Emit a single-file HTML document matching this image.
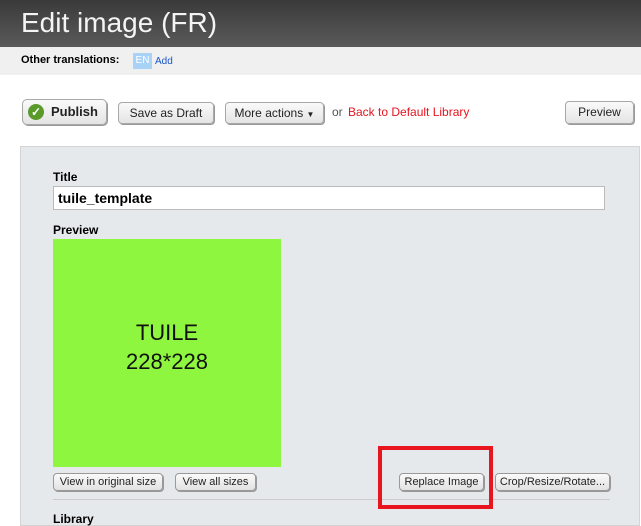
<!DOCTYPE html><html><head><style>
body{margin:0;width:641px;height:518px;overflow:hidden;font-family:"Liberation Sans",Arial,sans-serif;background:#fff;position:relative}
.a{position:absolute}
.btn{position:absolute;background:linear-gradient(#fafafa,#e4e4e4);border:1px solid #a8a8a8;border-radius:4px;font-size:12px;color:#222;text-align:center;box-sizing:border-box;box-shadow:1px 1px 0 #999}
.sb{position:absolute;background:linear-gradient(#fafafa,#e2e2e2);border:1px solid #999;border-radius:4px;font-size:11px;color:#222;text-align:center;box-sizing:border-box;height:18px;line-height:16px;box-shadow:1px 1px 0 #999}
</style></head><body>
<div class="a" style="left:0;top:0;width:641px;height:47px;background:linear-gradient(#3a3a3a,#5a5a5a)"></div>
<div class="a" style="left:21px;top:7px;font-size:28px;color:#f4f4f4">Edit image (FR)</div>
<div class="a" style="left:0;top:47px;width:641px;height:28px;background:#f0f0f0"></div>
<div class="a" style="left:21px;top:54px;font-size:11px;font-weight:bold">Other translations:</div>
<div class="a" style="left:133px;top:53px;width:19px;height:16px;background:#a9d2f7;color:#fff;font-size:10px;line-height:16px;text-align:center">EN</div>
<div class="a" style="left:155px;top:56px;font-size:10px;color:#1a55c8">Add</div>
<div class="btn" style="left:22px;top:99px;width:85px;height:26px;border-radius:5px"></div>
<div class="a" style="left:28px;top:104px;width:16px;height:16px;border-radius:50%;background:#5a9a2a;color:#fff;font-size:12px;line-height:16px;text-align:center;font-weight:bold">✓</div>
<div class="a" style="left:51px;top:104px;font-size:13px;font-weight:bold;color:#222">Publish</div>
<div class="btn" style="left:118px;top:102px;width:96px;height:22px;line-height:20px">Save as Draft</div>
<div class="btn" style="left:225px;top:102px;width:99px;height:22px;line-height:20px">More actions <span style="font-size:8px">▼</span></div>
<div class="a" style="left:332px;top:105px;font-size:12px;color:#555">or</div>
<div class="a" style="left:348px;top:105px;font-size:12px;color:#e8141e">Back to Default Library</div>
<div class="btn" style="left:565px;top:101px;width:69px;height:23px;line-height:21px">Preview</div>
<div class="a" style="left:20px;top:146px;width:620px;height:380px;background:#e6e9ec;border:1px solid #d4d4d4;box-sizing:border-box"></div>
<div class="a" style="left:53px;top:170px;font-size:12px;font-weight:bold">Title</div>
<div class="a" style="left:53px;top:186px;width:552px;height:24px;background:#fff;border:1px solid #bbb;box-sizing:border-box;font-size:14px;font-weight:bold;padding:3px 4px">tuile_template</div>
<div class="a" style="left:53px;top:223px;font-size:12px;font-weight:bold">Preview</div>
<div class="a" style="left:53px;top:239px;width:228px;height:228px;background:#8ef63e;text-align:center;font-size:22px;color:#111"><div style="margin-top:79px;line-height:29px">TUILE<br>228*228</div></div>
<div class="sb" style="left:53px;top:473px;width:110px">View in original size</div>
<div class="sb" style="left:175px;top:473px;width:81px">View all sizes</div>
<div class="sb" style="left:399px;top:473px;width:85px">Replace Image</div>
<div class="sb" style="left:495px;top:473px;width:115px">Crop/Resize/Rotate...</div>
<div class="a" style="left:53px;top:499px;width:557px;height:1px;background:#ccc"></div>
<div class="a" style="left:53px;top:512px;font-size:12px;font-weight:bold">Library</div>
<div class="a" style="left:378px;top:446px;width:115px;height:63px;border:4px solid #e8141e;box-sizing:border-box"></div>
</body></html>
